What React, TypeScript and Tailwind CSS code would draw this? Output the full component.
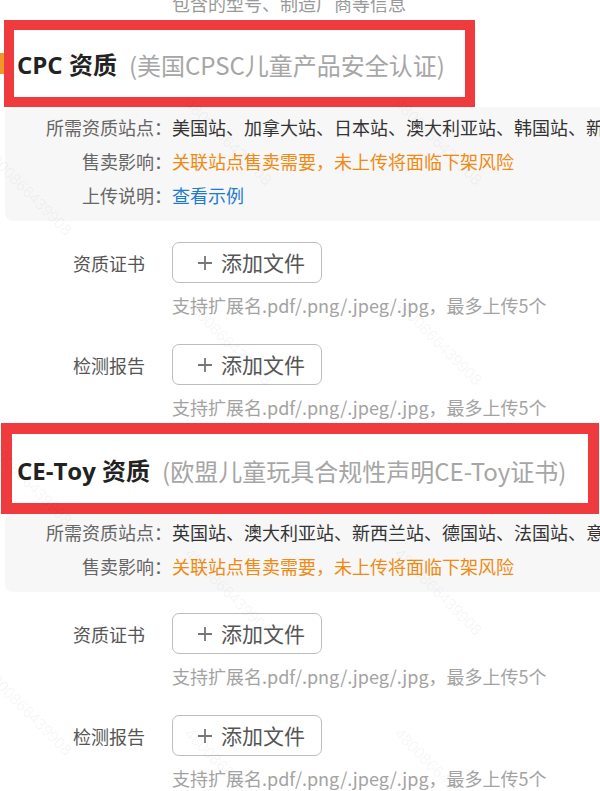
import React from "react";

const FONT = '"Noto Sans CJK SC", "Noto Sans", sans-serif';
const TITLE_FONT = '"Open Sans", "Noto Sans CJK SC", sans-serif';

function Plus() {
  return (
    <svg width="16" height="16" viewBox="0 0 16 16" className="shrink-0">
      <path d="M8 1v14M1 8h14" stroke="#777" strokeWidth="1.8" fill="none" />
    </svg>
  );
}

function UploadRow({ label, first }: { label: string; first?: boolean }) {
  return (
    <div className={first ? "mt-[21px]" : "mt-[27px]"}>
      <div className="flex items-center">
        <div className="w-[172px] pl-[73px] text-[18px] text-[#555] leading-[24px]">{label}</div>
        <button className="flex h-[41px] w-[150px] items-center gap-[8px] rounded-[7px] border border-[#bdbdbd] bg-white pl-[24px] text-[21px] leading-none text-[#555]">
          <Plus />
          <span>添加文件</span>
        </button>
      </div>
      <div className="mt-[10px] pl-[172px] text-[18px] leading-[24px] text-[#a3a3a3]">
        支持扩展名.pdf/.png/.jpeg/.jpg，最多上传5个
      </div>
    </div>
  );
}

function InfoRow({ label, children }: { label: string; children: React.ReactNode }) {
  return (
    <div className="flex h-[34px] items-center whitespace-nowrap text-[18px]">
      <div className="w-[167px] shrink-0 text-right text-[#666]">{label}</div>
      {children}
    </div>
  );
}

const WATERMARKS = [
  { x: -30, y: 180 },
  { x: 170, y: 130 },
  { x: 380, y: 130 },
  { x: -30, y: 470 },
  { x: 170, y: 330 },
  { x: 380, y: 330 },
  { x: 170, y: 580 },
  { x: 380, y: 580 },
  { x: -30, y: 700 },
  { x: 170, y: 760 },
  { x: 380, y: 760 },
];

export default function App() {
  return (
    <div className="relative h-[791px] w-[600px] overflow-hidden bg-white" style={{ fontFamily: FONT }}>
      {/* top cut text */}
      <div className="mt-[-9px] h-[24px] pl-[172px] text-[18px] leading-[24px] text-[#999]">
        包含的型号、制造厂商等信息
      </div>

      {/* Section 1 */}
      <div className="relative mt-[5px]">
        <div className="absolute left-0 top-[33px] h-[21px] w-[5px] bg-[#f0962a]" />
        <div className="relative ml-[4px] flex h-[87px] w-[471px] items-center border-[10px] border-[#ef3b3d] pl-[3px] pt-[2px]">
          <span className="text-[24px] font-bold text-[#222]" style={{ fontFamily: TITLE_FONT }}>
            CPC 资质
          </span>
          <span className="ml-[12px] text-[24px] text-[#a6a6a6]">(美国CPSC儿童产品安全认证)</span>
        </div>
      </div>
      <div className="ml-[5px] rounded-l-[8px] bg-[#f7f7f7] pb-[9px] pt-[3px]">
        <InfoRow label="所需资质站点：">
          <span className="text-[#333]">美国站、加拿大站、日本站、澳大利亚站、韩国站、新西兰站</span>
        </InfoRow>
        <InfoRow label="售卖影响：">
          <span className="text-[#f08a12]">关联站点售卖需要，未上传将面临下架风险</span>
        </InfoRow>
        <InfoRow label="上传说明：">
          <span className="text-[#1f7bd1]">查看示例</span>
        </InfoRow>
      </div>
      <UploadRow label="资质证书" first />
      <UploadRow label="检测报告" />

      {/* Section 2 */}
      <div className="ml-[1px] mt-[4px] flex h-[91px] w-[598px] items-center border-[11px] border-[#ef3b3d] pl-[5px] pt-[4px]">
        <span className="text-[24px] font-bold text-[#222]" style={{ fontFamily: TITLE_FONT }}>
          CE-Toy 资质
        </span>
        <span className="ml-[12px] whitespace-nowrap text-[24px] text-[#a6a6a6]">(欧盟儿童玩具合规性声明CE-Toy证书)</span>
      </div>
      <div className="ml-[5px] rounded-l-[8px] bg-[#f7f7f7] pb-[9px] pt-[1px]">
        <InfoRow label="所需资质站点：">
          <span className="text-[#333]">英国站、澳大利亚站、新西兰站、德国站、法国站、意大利站</span>
        </InfoRow>
        <InfoRow label="售卖影响：">
          <span className="text-[#f08a12]">关联站点售卖需要，未上传将面临下架风险</span>
        </InfoRow>
      </div>
      <UploadRow label="资质证书" first />
      <UploadRow label="检测报告" />

      {/* watermarks */}
      {WATERMARKS.map((w, i) => (
        <span
          key={i}
          className="pointer-events-none absolute rotate-[45deg] whitespace-nowrap text-[16px] text-[#0000000d]"
          style={{ left: w.x, top: w.y, fontFamily: '"Liberation Sans", sans-serif' }}
        >
          4800866439908
        </span>
      ))}
    </div>
  );
}
